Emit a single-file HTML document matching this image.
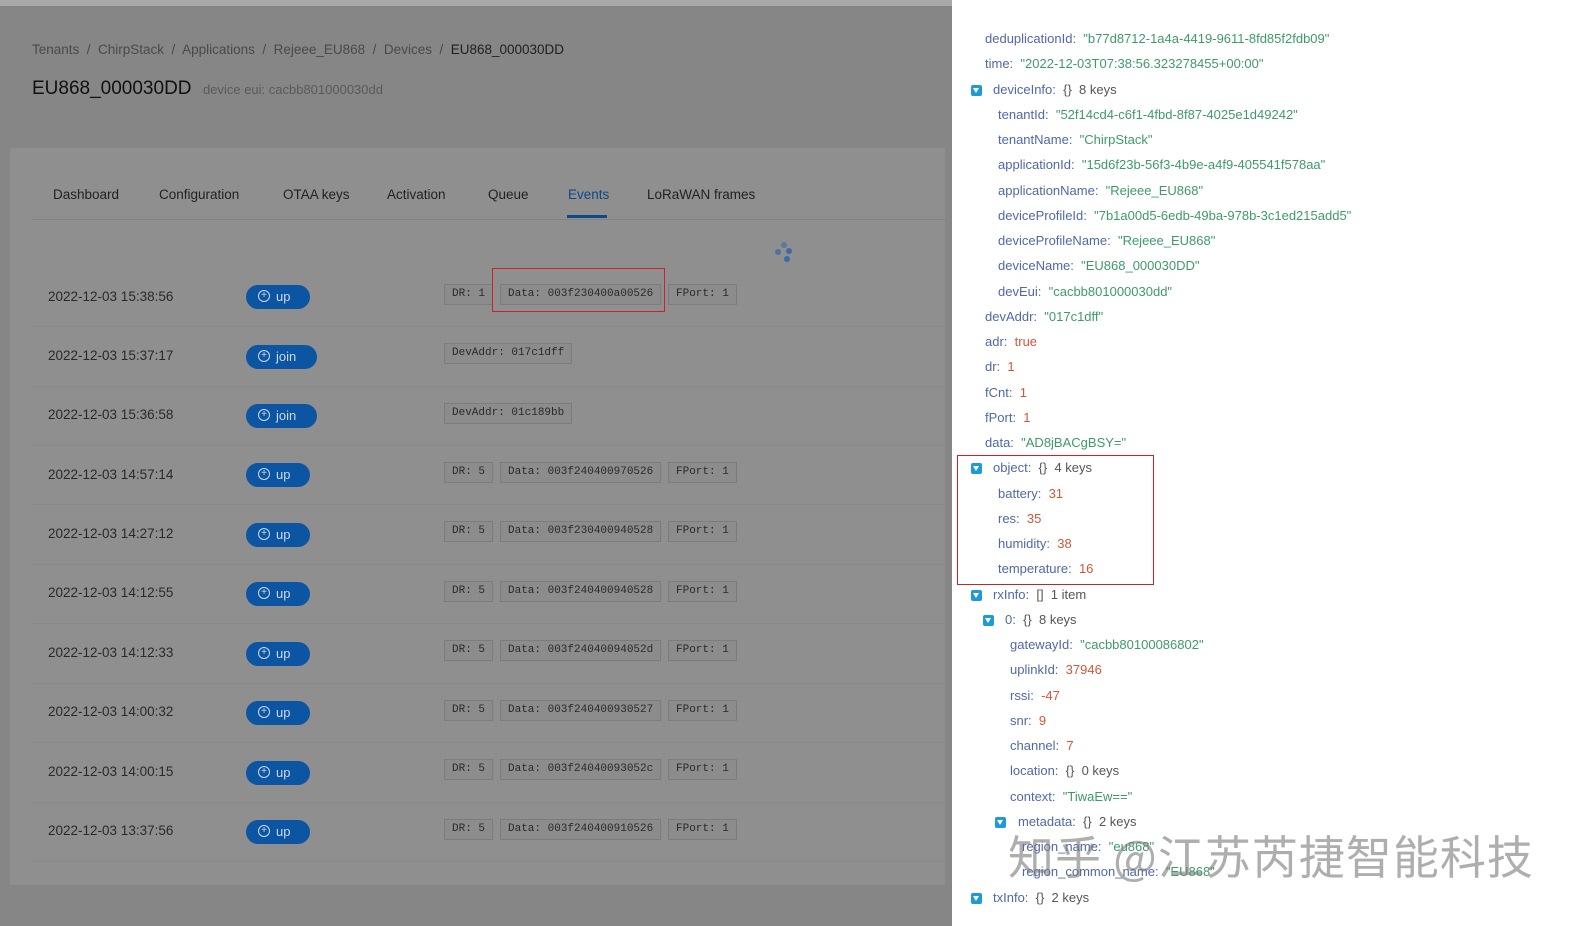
<!DOCTYPE html>
<html><head><meta charset="utf-8"><style>
*{margin:0;padding:0;box-sizing:border-box}
body{width:1584px;height:926px;overflow:hidden;background:#868686;font-family:"Liberation Sans","Noto Sans CJK SC",sans-serif;position:relative}
.a{position:absolute;white-space:nowrap}
.top{left:0;top:0;width:952px;height:6px;background:#a9a9a9}
.bc{left:32px;top:42px;font-size:13.5px;color:#4a4a4a}
.bc b{font-weight:normal;color:#1f1f1f}
.title{left:32px;top:78px;font-size:19px;color:#111}
.sub{left:203px;top:82px;font-size:13px;color:#5a5a5a}
.card{left:10px;top:148px;width:935px;height:737px;background:#8f8f8f}
.tab{top:187px;font-size:13.5px;color:#222}
.tabline{left:32px;top:219px;width:913px;height:1px;background:#828282}
.ul{left:567px;top:215px;width:40px;height:3px;background:#0b4a8a}
.date{left:48px;font-size:13.5px;color:#2a2a2a}
.btn{height:24px;border-radius:12px;background:#0c55a3;color:#cfd9e6;font-size:13px;line-height:24px;padding-left:30px}
.btn i{position:absolute;left:12px;top:5px;width:12px;height:12px;border:1.5px solid #cfd9e6;border-radius:50%;font-style:normal;font-size:10px;line-height:9px;text-align:center}
.tag{height:21px;border:1px solid #7c7c7c;background:#8c8c8c;font-family:"Liberation Mono",monospace;font-size:11px;line-height:19px;padding:0 7px;color:#2a2a2a}
.sep{left:32px;width:913px;height:1px;background:#898989}
.panel{left:952px;top:0;width:632px;height:926px;background:#fff}
.j{font-size:13px;color:#5068a8;position:absolute;white-space:nowrap}
.s{color:#3f9a6a}.n{color:#d0573a}.m{color:#555}
.tg{position:absolute;width:11px;height:11px;background:#1e9bd7;border-radius:2px}
.tg:after{content:"";position:absolute;left:2px;top:3px;border-left:3.5px solid transparent;border-right:3.5px solid transparent;border-top:5px solid #fff}
.red{border:1px solid #c8232c}
.wm{left:1008px;top:822px;font-size:46px;color:rgba(120,120,120,0.6);font-family:"Noto Sans CJK SC",sans-serif;letter-spacing:1px}
</style></head><body>
<div class="a top"></div>
<div class="a bc">Tenants &nbsp;/&nbsp; ChirpStack &nbsp;/&nbsp; Applications &nbsp;/&nbsp; Rejeee_EU868 &nbsp;/&nbsp; Devices &nbsp;/&nbsp; <b>EU868_000030DD</b></div>
<div class="a title">EU868_000030DD</div>
<div class="a sub">device eui: cacbb801000030dd</div>
<div class="a card"></div>
<div class="a tab" style="left:53px">Dashboard</div>
<div class="a tab" style="left:159px">Configuration</div>
<div class="a tab" style="left:283px">OTAA keys</div>
<div class="a tab" style="left:387px">Activation</div>
<div class="a tab" style="left:488px">Queue</div>
<div class="a tab" style="left:568px;color:#0b4a8a">Events</div>
<div class="a tab" style="left:647px">LoRaWAN frames</div>
<div class="a tabline"></div><div class="a ul"></div>
<div class="a" style="left:775px;top:242px;width:22px;height:22px">
<span class="a" style="left:6px;top:0;width:6px;height:6px;border-radius:50%;background:#3a6aa8;opacity:.6"></span>
<span class="a" style="left:0;top:7px;width:6px;height:6px;border-radius:50%;background:#3a6aa8;opacity:.8"></span>
<span class="a" style="left:11px;top:6px;width:6px;height:6px;border-radius:50%;background:#3a6aa8"></span>
<span class="a" style="left:9px;top:14px;width:6px;height:6px;border-radius:50%;background:#3a6aa8"></span></div>

<div class="a date" style="top:289px">2022-12-03 15:38:56</div>
<div class="a btn" style="left:246px;top:285px;width:64px"><i>+</i>up</div>
<div class="a tag" style="left:444px;top:284px">DR: 1</div><div class="a tag" style="left:500px;top:284px">Data: 003f230400a00526</div><div class="a tag" style="left:668px;top:284px">FPort: 1</div>
<div class="a red" style="left:492px;top:268px;width:173px;height:44px"></div>
<div class="a sep" style="top:326px"></div>

<div class="a date" style="top:348px">2022-12-03 15:37:17</div>
<div class="a btn" style="left:246px;top:345px;width:71px"><i>+</i>join</div>
<div class="a tag" style="left:444px;top:343px">DevAddr: 017c1dff</div>
<div class="a sep" style="top:386px"></div>

<div class="a date" style="top:407px">2022-12-03 15:36:58</div>
<div class="a btn" style="left:246px;top:404px;width:71px"><i>+</i>join</div>
<div class="a tag" style="left:444px;top:403px">DevAddr: 01c189bb</div>
<div class="a sep" style="top:445px"></div>

<div class="a date" style="top:467px">2022-12-03 14:57:14</div>
<div class="a btn" style="left:246px;top:463px;width:64px"><i>+</i>up</div>
<div class="a tag" style="left:444px;top:462px">DR: 5</div><div class="a tag" style="left:500px;top:462px">Data: 003f240400970526</div><div class="a tag" style="left:668px;top:462px">FPort: 1</div>
<div class="a sep" style="top:504px"></div>

<div class="a date" style="top:526px">2022-12-03 14:27:12</div>
<div class="a btn" style="left:246px;top:523px;width:64px"><i>+</i>up</div>
<div class="a tag" style="left:444px;top:521px">DR: 5</div><div class="a tag" style="left:500px;top:521px">Data: 003f230400940528</div><div class="a tag" style="left:668px;top:521px">FPort: 1</div>
<div class="a sep" style="top:564px"></div>

<div class="a date" style="top:585px">2022-12-03 14:12:55</div>
<div class="a btn" style="left:246px;top:582px;width:64px"><i>+</i>up</div>
<div class="a tag" style="left:444px;top:581px">DR: 5</div><div class="a tag" style="left:500px;top:581px">Data: 003f240400940528</div><div class="a tag" style="left:668px;top:581px">FPort: 1</div>
<div class="a sep" style="top:623px"></div>

<div class="a date" style="top:645px">2022-12-03 14:12:33</div>
<div class="a btn" style="left:246px;top:642px;width:64px"><i>+</i>up</div>
<div class="a tag" style="left:444px;top:640px">DR: 5</div><div class="a tag" style="left:500px;top:640px">Data: 003f24040094052d</div><div class="a tag" style="left:668px;top:640px">FPort: 1</div>
<div class="a sep" style="top:683px"></div>

<div class="a date" style="top:704px">2022-12-03 14:00:32</div>
<div class="a btn" style="left:246px;top:701px;width:64px"><i>+</i>up</div>
<div class="a tag" style="left:444px;top:700px">DR: 5</div><div class="a tag" style="left:500px;top:700px">Data: 003f240400930527</div><div class="a tag" style="left:668px;top:700px">FPort: 1</div>
<div class="a sep" style="top:742px"></div>

<div class="a date" style="top:764px">2022-12-03 14:00:15</div>
<div class="a btn" style="left:246px;top:761px;width:64px"><i>+</i>up</div>
<div class="a tag" style="left:444px;top:759px">DR: 5</div><div class="a tag" style="left:500px;top:759px">Data: 003f24040093052c</div><div class="a tag" style="left:668px;top:759px">FPort: 1</div>
<div class="a sep" style="top:802px"></div>

<div class="a date" style="top:823px">2022-12-03 13:37:56</div>
<div class="a btn" style="left:246px;top:820px;width:64px"><i>+</i>up</div>
<div class="a tag" style="left:444px;top:819px">DR: 5</div><div class="a tag" style="left:500px;top:819px">Data: 003f240400910526</div><div class="a tag" style="left:668px;top:819px">FPort: 1</div>
<div class="a sep" style="top:861px"></div>

<div class="a panel"></div>
<div class="j" style="left:985px;top:31px">deduplicationId: &nbsp;<span class="s">"b77d8712-1a4a-4419-9611-8fd85f2fdb09"</span></div>
<div class="j" style="left:985px;top:56px">time: &nbsp;<span class="s">"2022-12-03T07:38:56.323278455+00:00"</span></div>
<div class="tg" style="left:971px;top:85px"></div><div class="j" style="left:993px;top:82px">deviceInfo: &nbsp;<span class="m">{} &nbsp;8 keys</span></div>
<div class="j" style="left:998px;top:107px">tenantId: &nbsp;<span class="s">"52f14cd4-c6f1-4fbd-8f87-4025e1d49242"</span></div>
<div class="j" style="left:998px;top:132px">tenantName: &nbsp;<span class="s">"ChirpStack"</span></div>
<div class="j" style="left:998px;top:157px">applicationId: &nbsp;<span class="s">"15d6f23b-56f3-4b9e-a4f9-405541f578aa"</span></div>
<div class="j" style="left:998px;top:183px">applicationName: &nbsp;<span class="s">"Rejeee_EU868"</span></div>
<div class="j" style="left:998px;top:208px">deviceProfileId: &nbsp;<span class="s">"7b1a00d5-6edb-49ba-978b-3c1ed215add5"</span></div>
<div class="j" style="left:998px;top:233px">deviceProfileName: &nbsp;<span class="s">"Rejeee_EU868"</span></div>
<div class="j" style="left:998px;top:258px">deviceName: &nbsp;<span class="s">"EU868_000030DD"</span></div>
<div class="j" style="left:998px;top:284px">devEui: &nbsp;<span class="s">"cacbb801000030dd"</span></div>
<div class="j" style="left:985px;top:309px">devAddr: &nbsp;<span class="s">"017c1dff"</span></div>
<div class="j" style="left:985px;top:334px">adr: &nbsp;<span class="n">true</span></div>
<div class="j" style="left:985px;top:359px">dr: &nbsp;<span class="n">1</span></div>
<div class="j" style="left:985px;top:385px">fCnt: &nbsp;<span class="n">1</span></div>
<div class="j" style="left:985px;top:410px">fPort: &nbsp;<span class="n">1</span></div>
<div class="j" style="left:985px;top:435px">data: &nbsp;<span class="s">"AD8jBACgBSY="</span></div>
<div class="tg" style="left:971px;top:463px"></div><div class="j" style="left:993px;top:460px">object: &nbsp;<span class="m">{} &nbsp;4 keys</span></div>
<div class="j" style="left:998px;top:486px">battery: &nbsp;<span class="n">31</span></div>
<div class="j" style="left:998px;top:511px">res: &nbsp;<span class="n">35</span></div>
<div class="j" style="left:998px;top:536px">humidity: &nbsp;<span class="n">38</span></div>
<div class="j" style="left:998px;top:561px">temperature: &nbsp;<span class="n">16</span></div>
<div class="a red" style="left:957px;top:455px;width:197px;height:130px"></div>
<div class="tg" style="left:971px;top:590px"></div><div class="j" style="left:993px;top:587px">rxInfo: &nbsp;<span class="m">[] &nbsp;1 item</span></div>
<div class="tg" style="left:983px;top:615px"></div><div class="j" style="left:1005px;top:612px">0: &nbsp;<span class="m">{} &nbsp;8 keys</span></div>
<div class="j" style="left:1010px;top:637px">gatewayId: &nbsp;<span class="s">"cacbb80100086802"</span></div>
<div class="j" style="left:1010px;top:662px">uplinkId: &nbsp;<span class="n">37946</span></div>
<div class="j" style="left:1010px;top:688px">rssi: &nbsp;<span class="n">-47</span></div>
<div class="j" style="left:1010px;top:713px">snr: &nbsp;<span class="n">9</span></div>
<div class="j" style="left:1010px;top:738px">channel: &nbsp;<span class="n">7</span></div>
<div class="j" style="left:1010px;top:763px">location: &nbsp;<span class="m">{} &nbsp;0 keys</span></div>
<div class="j" style="left:1010px;top:789px">context: &nbsp;<span class="s">"TiwaEw=="</span></div>
<div class="tg" style="left:995px;top:817px"></div><div class="j" style="left:1018px;top:814px">metadata: &nbsp;<span class="m">{} &nbsp;2 keys</span></div>
<div class="j" style="left:1022px;top:839px">region_name: &nbsp;<span class="s">"eu868"</span></div>
<div class="j" style="left:1022px;top:864px">region_common_name: &nbsp;<span class="s">"EU868"</span></div>
<div class="tg" style="left:971px;top:893px"></div><div class="j" style="left:993px;top:890px">txInfo: &nbsp;<span class="m">{} &nbsp;2 keys</span></div>
<div class="a wm">知乎 @江苏芮捷智能科技</div>
</body></html>
